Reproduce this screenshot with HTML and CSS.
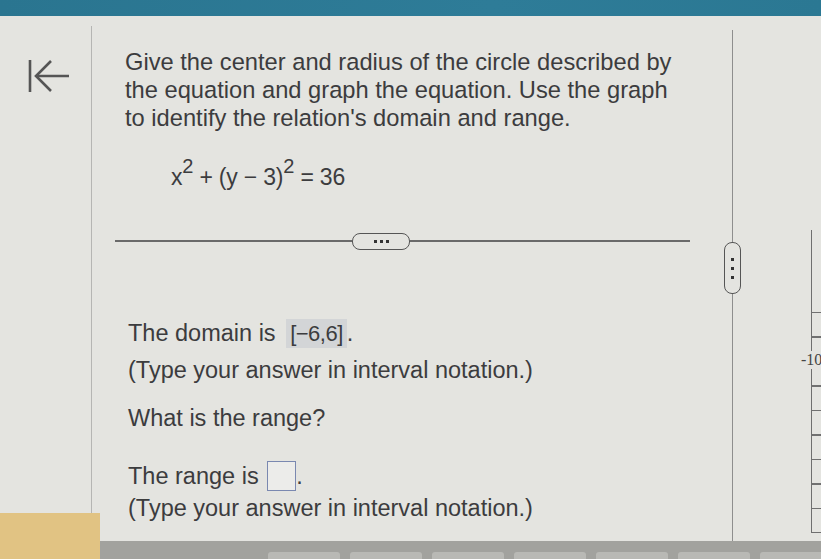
FILE: index.html
```html
<!DOCTYPE html>
<html>
<head>
<meta charset="utf-8">
<link rel="stylesheet" href="styles.css">
</head>
<body>
<div class="topbar"></div>
<div class="main">
  <div class="left">
    <div class="back">
      <svg width="44" height="36" viewBox="0 0 44 36">
        <line x1="3" y1="2" x2="3" y2="34" stroke="#555" stroke-width="2.6"/>
        <line x1="9" y1="18" x2="42" y2="18" stroke="#555" stroke-width="2.6"/>
        <polyline points="24,3 9,18 24,33" fill="none" stroke="#555" stroke-width="2.6"/>
      </svg>
    </div>
  </div>
  <div class="content">
    <p class="q">Give the center and radius of the circle described by the equation and graph the equation. Use the graph to identify the relation's domain and range.</p>
    <div class="eq">x<sup>2</sup> + (y − 3)<sup>2</sup> = 36</div>
    <div class="sep">
      <div class="sepline"></div>
      <div class="pill"><span></span><span></span><span></span></div>
      <div class="sepline long"></div>
    </div>
    <div class="answers">
      <p class="line l-domain">The domain is <span class="ans">[−6,6]</span>.</p>
      <p class="line l-type1">(Type your answer in interval notation.)</p>
      <p class="line l-what">What is the range?</p>
      <p class="line l-range">The range is <span class="box"></span>.</p>
      <p class="line l-type2">(Type your answer in interval notation.)</p>
    </div>
  </div>
  <div class="right">
    <div class="vpill"><span></span><span></span><span></span></div>
    <div class="graph">
      <div class="tick"></div>
      <div class="tick"></div>
      <div class="tick lbl"><span>-10</span></div>
      <div class="tick"></div>
      <div class="tick"></div>
      <div class="tick"></div>
      <div class="tick"></div>
      <div class="tick"></div>
      <div class="tick"></div>
    </div>
  </div>
</div>
<div class="bottom">
  <div class="yellow"></div>
  <div class="bar">
    <div class="tabs">
      <div class="tab"></div>
      <div class="tab"></div>
      <div class="tab"></div>
      <div class="tab"></div>
      <div class="tab"></div>
      <div class="tab"></div>
      <div class="tab"></div>
    </div>
  </div>
</div>
</body>
</html>
```

FILE: styles.css
```css
html, body {
  margin: 0;
  padding: 0;
}
body {
  width: 821px;
  height: 559px;
  overflow: hidden;
  background: #e4e4e0;
  font-family: "Liberation Sans", Arial, sans-serif;
  color: #3c3c3e;
}
.topbar {
  height: 16px;
  background: linear-gradient(90deg, #2a7590, #2e7c98 60%, #2b7893);
}
.main {
  display: flex;
  height: 525px;
}
.left {
  width: 91px;
  flex: none;
  border-right: 1px solid #b5b5b3;
  margin-top: 10px;
}
.back {
  padding: 32px 0 0 27px;
}
.back svg {
  display: block;
}
.content {
  width: 607px;
  flex: none;
  padding: 0 0 0 33px;
  border-right: 1px solid #8e8e8e;
  margin-top: 14px;
}
.q {
  margin: 18px 0 0 0;
  font-size: 23.7px;
  line-height: 28px;
  width: 556px;
}
.eq {
  margin: 33px 0 0 46px;
  font-size: 23px;
  letter-spacing: -0.2px;
  line-height: 24px;
  height: 24px;
}
.eq sup {
  font-size: 20px;
  position: relative;
  top: -3px;
  vertical-align: super;
  line-height: 0;
}
.sep {
  display: flex;
  align-items: center;
  margin: 43px 0 0 -10px;
  width: 575px;
  height: 18px;
}
.sepline {
  height: 1.5px;
  background: #6a6a6a;
  width: 237px;
}
.sepline.long {
  flex: 1;
}
.pill {
  width: 56px;
  height: 15px;
  border: 1.5px solid #555;
  border-radius: 8px;
  display: flex;
  justify-content: center;
  align-items: center;
  gap: 3px;
}
.pill span, .vpill span {
  width: 3px;
  height: 3px;
  background: #333;
}
.answers {
  padding-left: 3px;
}
.line {
  margin: 0;
  font-size: 23.5px;
  line-height: 28px;
  height: 28px;
}
.l-domain { margin-top: 69px; }
.l-type1 { margin-top: 9px; }
.l-what { margin-top: 20px; }
.l-range { margin-top: 29px; }
.l-type2 { margin-top: 5px; }
.ans {
  display: inline-block;
  background: #d3d5d7;
  padding: 0 4px 0 4px;
  margin-left: 4px;
  font-size: 22px;
  line-height: 29px;
  letter-spacing: -0.5px;
}
.box {
  display: inline-block;
  width: 27px;
  height: 28px;
  border: 1px solid #7a88b0;
  background: #ececea;
  vertical-align: -7px;
  margin-left: 2px;
}
.right {
  flex: 1;
  position: relative;
}
.vpill {
  position: absolute;
  left: -9px;
  top: 226px;
  width: 15px;
  height: 50px;
  border: 1.5px solid #555;
  border-radius: 8px;
  background: #e4e4e0;
  display: flex;
  flex-direction: column;
  justify-content: center;
  align-items: center;
  gap: 6px;
}
.graph {
  position: absolute;
  left: 78px;
  top: 214px;
  right: 0;
  height: 302px;
  border-left: 1.5px solid #6f6f6f;
  border-bottom: 1.5px solid #6f6f6f;
  display: flex;
  flex-direction: column;
  justify-content: flex-end;
  gap: 23px;
}
.tick {
  height: 1.5px;
  background: #707070;
  position: relative;
}
.tick:last-child {
  margin-bottom: 23px;
}
.tick.lbl {
  background: transparent;
}
.tick.lbl span {
  position: absolute;
  left: -11px;
  top: -10px;
  font-family: "Liberation Serif", serif;
  font-size: 16px;
  color: #444;
  background: #e4e4e0;
}
.bottom {
  display: flex;
  height: 18px;
}
.yellow {
  width: 100px;
  flex: none;
  background: #e1c383;
  margin-top: -28px;
  height: 46px;
}
.bar {
  flex: 1;
  background: #a2a29e;
  padding-top: 11px;
}
.tabs {
  display: flex;
  gap: 10px;
  padding-left: 168px;
}
.tab {
  height: 7px;
  width: 72px;
  flex: none;
  background: #b9b9b5;
  border-radius: 3px 3px 0 0;
}
```
